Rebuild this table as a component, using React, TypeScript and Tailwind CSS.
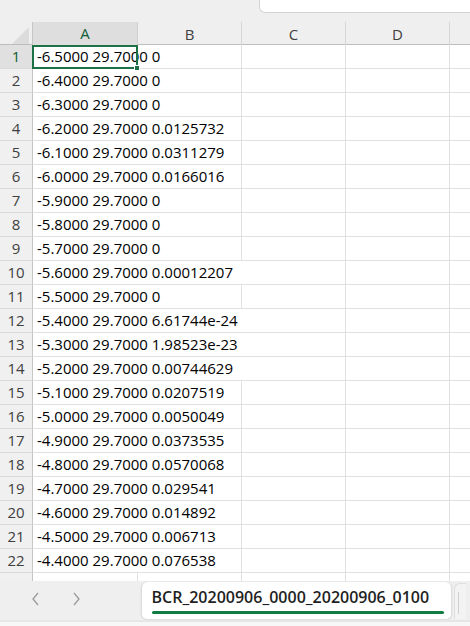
import React from "react";

const rows: string[] = [
  "-6.5000 29.7000 0",
  "-6.4000 29.7000 0",
  "-6.3000 29.7000 0",
  "-6.2000 29.7000 0.0125732",
  "-6.1000 29.7000 0.0311279",
  "-6.0000 29.7000 0.0166016",
  "-5.9000 29.7000 0",
  "-5.8000 29.7000 0",
  "-5.7000 29.7000 0",
  "-5.6000 29.7000 0.00012207",
  "-5.5000 29.7000 0",
  "-5.4000 29.7000 6.61744e-24",
  "-5.3000 29.7000 1.98523e-23",
  "-5.2000 29.7000 0.00744629",
  "-5.1000 29.7000 0.0207519",
  "-5.0000 29.7000 0.0050049",
  "-4.9000 29.7000 0.0373535",
  "-4.8000 29.7000 0.0570068",
  "-4.7000 29.7000 0.029541",
  "-4.6000 29.7000 0.014892",
  "-4.5000 29.7000 0.006713",
  "-4.4000 29.7000 0.076538",
];

const font = { fontFamily: "'Open Sans', 'Noto Sans', sans-serif" };

function DataRow({ n, text }: { n: number; text: string }) {
  const span3 = text.length >= 26;
  const selected = n === 1;
  return (
    <div className="grid h-[24px] grid-cols-[33px_105px_104px_104px_104px_1fr]">
      <div
        className={`flex items-center justify-center border-r border-b border-r-[#c6c6c6] border-b-[#dadada] text-[15px] ${
          selected ? "bg-[#e0e0e0] text-[#0f5e35]" : "bg-[#f0f0f0] text-[#404040]"
        }`}
      >
        {n}
      </div>
      <div
        className={`relative flex items-center whitespace-nowrap border-r border-b border-[#e1e1e1] pl-[4px] text-[15px] text-black ${
          span3 ? "col-span-3" : "col-span-2"
        }`}
      >
        {text}
        {selected && (
          <div className="pointer-events-none absolute -left-[1px] -top-[1px] h-[25px] w-[106px] border-2 border-[#1e7145]">
            <div className="absolute -bottom-[4px] -right-[4px] h-[6px] w-[6px] border border-white bg-[#1e7145]" />
          </div>
        )}
      </div>
      {!span3 && <div className="border-r border-b border-[#e1e1e1]" />}
      <div className="border-r border-b border-[#e1e1e1]" />
      <div className="border-b border-[#e1e1e1]" />
    </div>
  );
}

export default function App() {
  return (
    <div className="flex h-[626px] w-[470px] flex-col overflow-hidden bg-white" style={font}>
      {/* top strip */}
      <div className="flex h-[22px] shrink-0 bg-[#efefef]">
        <div className="ml-auto h-[13px] w-[211px] rounded-bl-[6px] border-b border-l border-[#d4d4d4] bg-white" />
      </div>
      {/* column headers */}
      <div className="grid h-[23px] shrink-0 grid-cols-[33px_105px_104px_104px_104px_1fr] border-b border-[#bdbdbd] bg-[#efefef] text-[15px] text-[#404040]">
        <div className="flex items-end justify-end border-r border-[#c6c6c6] pb-[3px] pr-[3px]">
          <svg width="17" height="17" viewBox="0 0 17 17">
            <path d="M17 0 L17 17 L0 17 Z" fill="#dcdcdc" />
          </svg>
        </div>
        <div className="flex items-center justify-center border-r border-b-2 border-r-[#d0d0d0] border-b-[#1e7145] bg-[#dedede] text-[#0f5e35]">A</div>
        <div className="flex items-center justify-center border-r border-[#d6d6d6]">B</div>
        <div className="flex items-center justify-center border-r border-[#d6d6d6]">C</div>
        <div className="flex items-center justify-center border-r border-[#d6d6d6]">D</div>
        <div />
      </div>
      {/* rows */}
      <div className="flex-1 overflow-hidden">
        {rows.map((t, i) => (
          <DataRow key={i} n={i + 1} text={t} />
        ))}
        <div className="grid h-[24px] grid-cols-[33px_105px_104px_104px_104px_1fr]">
          <div className="flex items-center justify-center border-r border-[#c6c6c6] bg-[#f0f0f0] text-[15px] text-[#404040]">23</div>
          <div className="border-r border-[#e1e1e1]" />
          <div className="border-r border-[#e1e1e1]" />
          <div className="border-r border-[#e1e1e1]" />
          <div className="border-r border-[#e1e1e1]" />
          <div />
        </div>
      </div>
      {/* bottom sheet bar */}
      <div className="flex h-[45px] shrink-0 flex-col bg-[#efefef]">
        <div className="flex h-[39px] items-stretch pt-[1px]">
          <div className="flex w-[141px] items-center pb-[4px] pl-[30px] text-[#9a9a9a]">
            <svg width="12" height="16" viewBox="0 0 12 16" fill="none" stroke="currentColor" strokeWidth="1.3">
              <path d="M8 2 L3 8 L8 14" />
            </svg>
            <svg className="ml-[28px]" width="12" height="16" viewBox="0 0 12 16" fill="none" stroke="currentColor" strokeWidth="1.3">
              <path d="M4 2 L9 8 L4 14" />
            </svg>
          </div>
          <div className="flex w-[313px] flex-col rounded-[6px] border border-t-0 border-[#dedede] bg-white shadow-[0_0_0_0.5px_#e2e2e2]">
            <div className="flex flex-1 flex-col items-start pl-[10px] pt-[4px]">
              <span className="text-[16px] font-semibold leading-[22px] text-[#1f1f1f]">BCR_20200906_0000_20200906_0100</span>
              <div className="mt-[3px] h-[3px] w-[292px] rounded-full bg-[#107c41]" />
            </div>
          </div>
          <div className="ml-[-2px] flex w-[20px] items-center">
            <div className="ml-[4px] h-[36px] w-[12px] rounded-tl-[6px] border-l border-t border-[#dedede] bg-[#f3f3f3]">
              <div className="ml-[3px] mt-[8px] h-[22px] w-px bg-[#cfcfcf]" />
            </div>
          </div>
        </div>
        <div className="h-[2px] bg-[#e6e6e6]" />
        <div className="flex-1 bg-[#f7f7f7]" />
      </div>
    </div>
  );
}
